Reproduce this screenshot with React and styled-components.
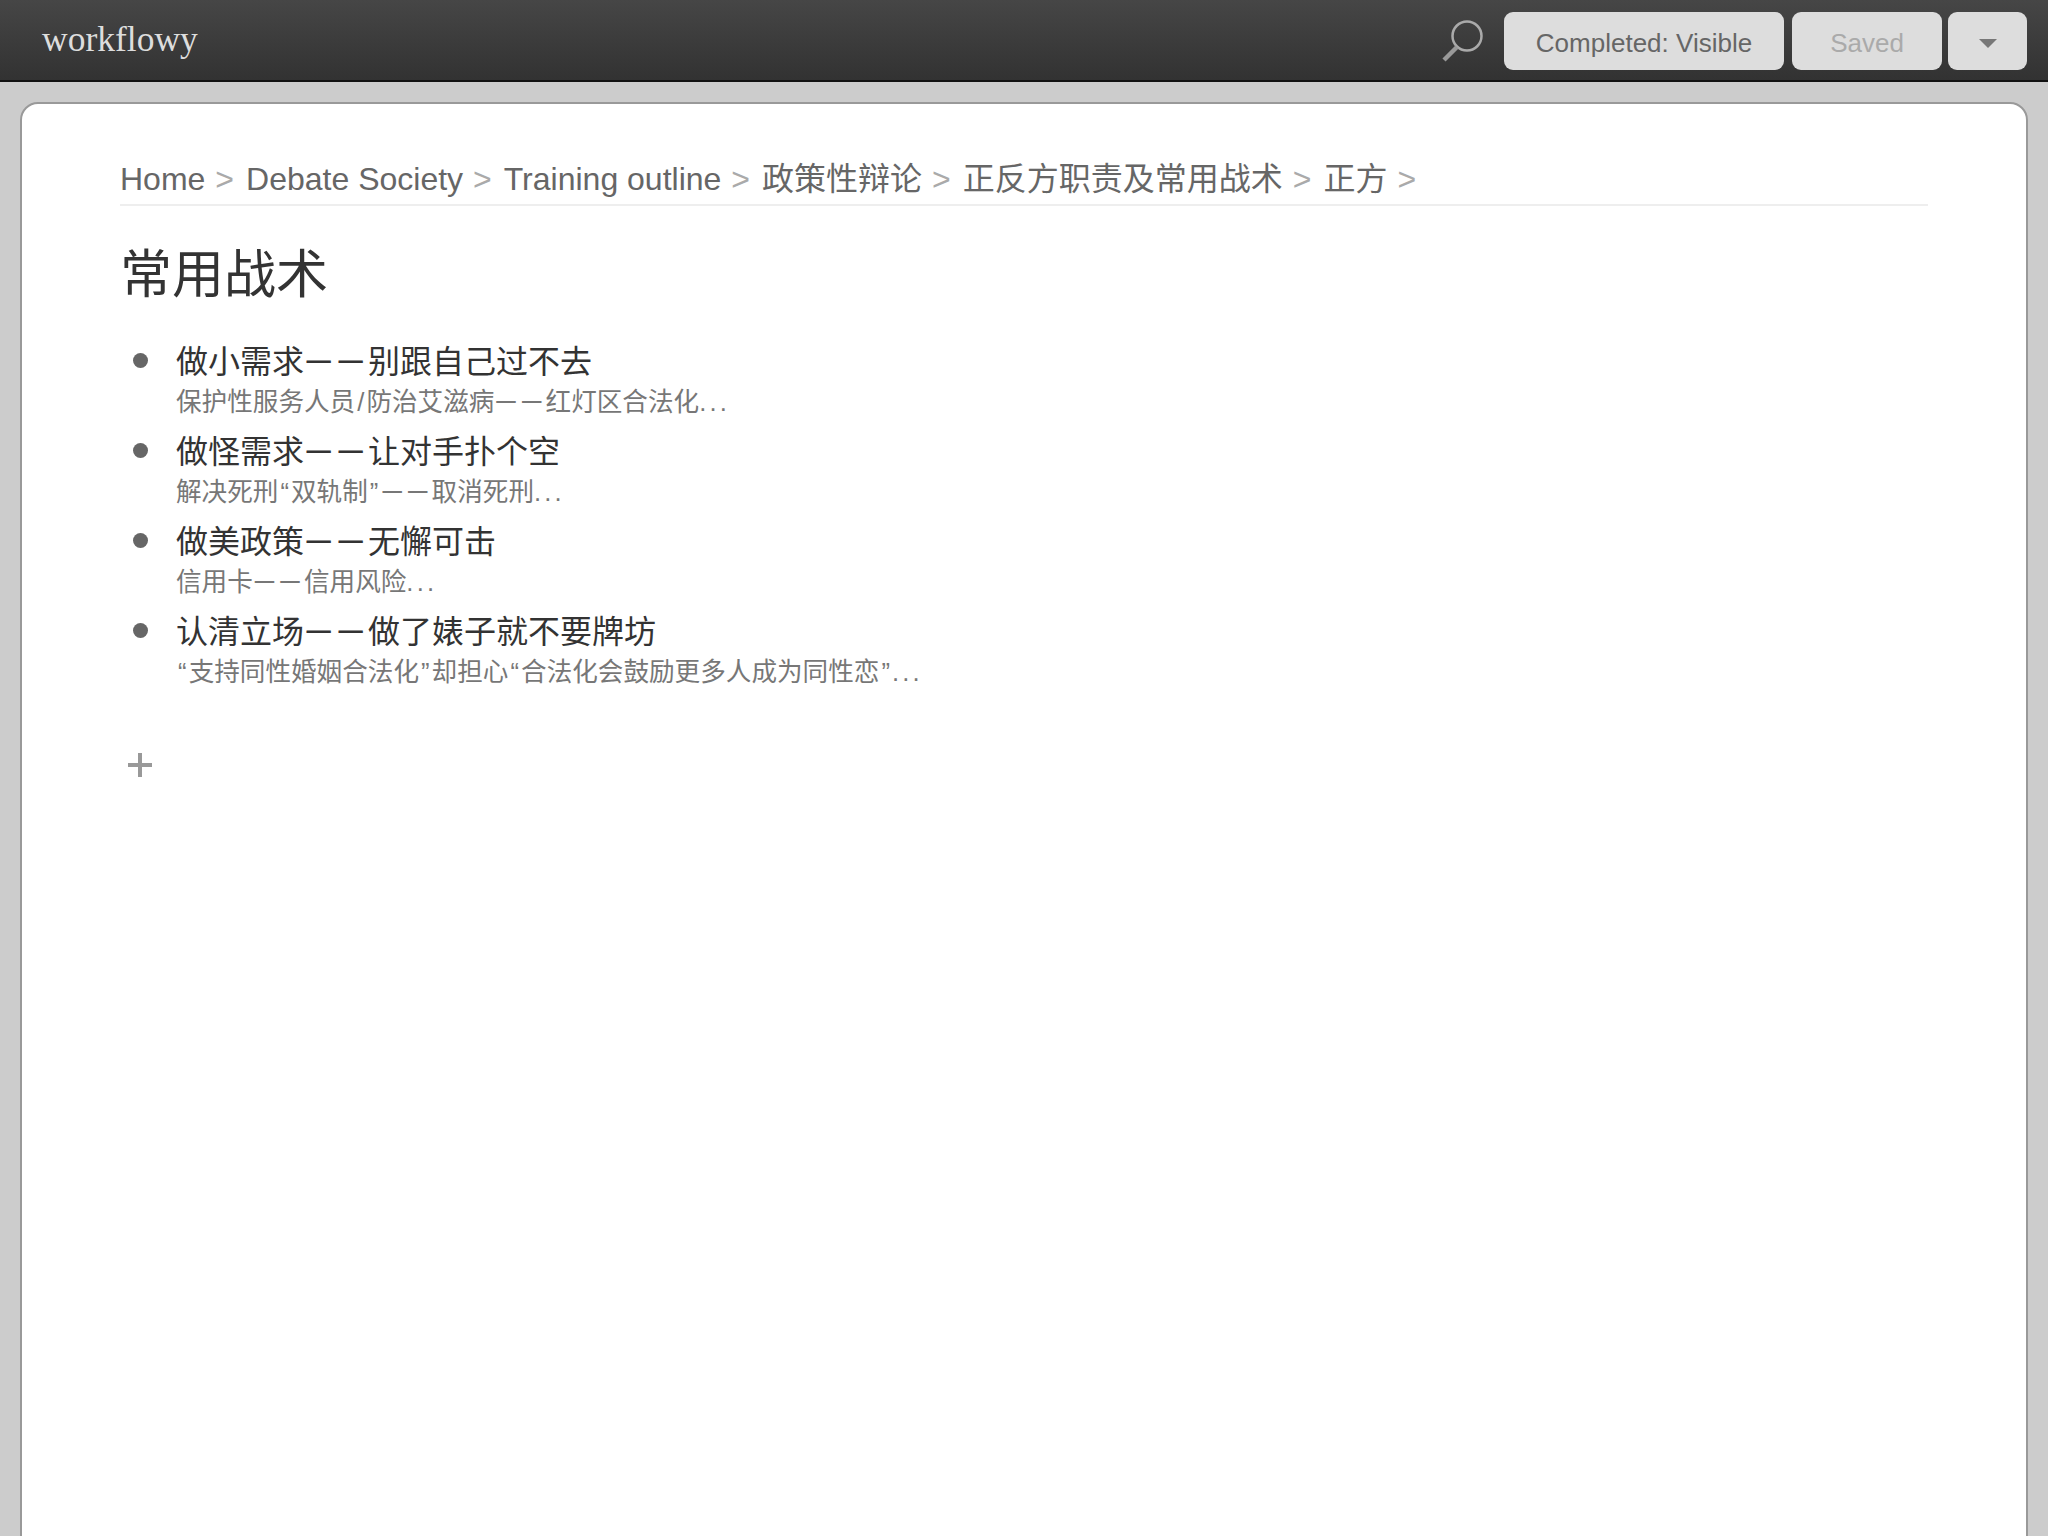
import React from 'react';
import styled, { createGlobalStyle } from 'styled-components';

const sans = '"Liberation Sans", "Noto Sans CJK SC", sans-serif';

const GlobalStyle = createGlobalStyle`
  html, body {
    margin: 0;
    background: #ccc;
  }
  body {
    font-family: ${sans};
    height: 1536px;
    overflow: hidden;
  }
`;

const Header = styled.header`
  display: flex;
  align-items: center;
  padding: 2px 21px 0 42px;
  height: 78px;
  background: linear-gradient(#464646, #323232);
  border-bottom: 2px solid #111;
`;
const Logo = styled.div`
  font-family: "Liberation Serif", serif;
  font-size: 35.5px;
  color: #ddd;
  margin-right: auto;
  margin-top: -4px;
`;
const SearchIcon = styled.svg`
  width: 44px;
  height: 44px;
  margin: -2px 19px 0 0;
`;
const Button = styled.div`
  height: 58px;
  width: ${props => props.$width}px;
  margin-left: ${props => props.$gap || 0}px;
  display: flex;
  align-items: center;
  justify-content: center;
  background: #ddd;
  border-radius: 9px;
  font-size: 26px;
  padding-top: 4px;
  box-sizing: border-box;
  color: ${props => props.$muted ? '#aaa' : '#666'};
`;
const Caret = styled.div`
  width: 0;
  height: 0;
  border-left: 9px solid transparent;
  border-right: 9px solid transparent;
  border-top: 9px solid #777;
`;
const Card = styled.main`
  margin: 20px 20px 0;
  padding: 49px 98px 0;
  min-height: 1450px;
  background: #fff;
  border: 2px solid #999;
  border-radius: 18px;
`;
const Breadcrumb = styled.nav`
  display: flex;
  height: 51px;
  align-items: center;
  border-bottom: 2px solid #eee;
  font-size: 32px;
  line-height: 32px;
  color: #666;
`;
const Sep = styled.span`
  color: #aaa;
  margin: 0 12px 0 10px;
`;
const Title = styled.h1`
  margin: 38px 0 0;
  font-size: 52px;
  line-height: 62px;
  font-weight: 400;
  color: #333;
`;
const List = styled.div`
  margin-top: 28px;
`;
const Item = styled.div`
  display: flex;
  height: 90px;
`;
const BulletCell = styled.div`
  width: 56px;
  height: 53px;
  display: flex;
  align-items: center;
  padding-left: 13px;
  box-sizing: border-box;
`;
const Bullet = styled.div`
  width: 15px;
  height: 15px;
  border-radius: 50%;
  background: #666;
`;
const Name = styled.div`
  font-size: 32px;
  line-height: 48px;
  padding: 4px 0 3px;
  color: #333;
`;
const Note = styled.div`
  font-size: 25.6px;
  line-height: 26px;
  color: #777;
`;
const Dash = styled.span`
  font-size: 0.76em;
  font-weight: 700;
  line-height: 0;
  letter-spacing: 0.316em;
  vertical-align: 0.2em;
  padding-left: 0.1em;
  margin-right: -0.1em;
`;
const Dots = styled.span`
  letter-spacing: 0.125em;
`;
const Mark = styled.span`
  letter-spacing: 0.08em;
  margin-left: 0.08em;
`;
const AddButton = styled.svg`
  display: block;
  width: 24px;
  height: 24px;
  margin: 59px 0 0 8px;
`;

const crumbs = ['Home', 'Debate Society', 'Training outline', '政策性辩论', '正反方职责及常用战术', '正方'];

const items = [
  {
    name: '做小需求——别跟自己过不去',
    note: '保护性服务人员/防治艾滋病——红灯区合法化...',
  },
  {
    name: '做怪需求——让对手扑个空',
    note: '解决死刑“双轨制”——取消死刑...',
  },
  {
    name: '做美政策——无懈可击',
    note: '信用卡——信用风险...',
  },
  {
    name: '认清立场——做了婊子就不要牌坊',
    note: '“支持同性婚姻合法化”却担心“合法化会鼓励更多人成为同性恋”...',
  },
];

// the latin glyphs sit wider in the original's CJK font
const format = text => text.split(/(——|[“”/]|\.\.\.)/).map((part, i) => {
  if (part === '——') return <Dash key={i}>{part}</Dash>;
  if (part === '...') return <Dots key={i}>{part}</Dots>;
  if (part === '“' || part === '”' || part === '/') return <Mark key={i}>{part}</Mark>;
  return part;
});

const App = () => (
  <>
    <GlobalStyle />
    <Header>
      <Logo>workflowy</Logo>
      <SearchIcon viewBox="0 0 44 44">
        <circle cx="26" cy="18" r="14.5" fill="none" stroke="#aaa" strokeWidth="2.5" />
        <line x1="16" y1="29" x2="3" y2="42" stroke="#999" strokeWidth="4.5" />
      </SearchIcon>
      <Button $width={280}>Completed: Visible</Button>
      <Button $width={150} $gap={8} $muted>Saved</Button>
      <Button $width={79} $gap={6}><Caret /></Button>
    </Header>
    <Card>
      <Breadcrumb>
        {crumbs.map(c => (
          <React.Fragment key={c}>
            <span>{c}</span>
            <Sep>&gt;</Sep>
          </React.Fragment>
        ))}
      </Breadcrumb>
      <Title>常用战术</Title>
      <List>
        {items.map(item => (
          <Item key={item.name}>
            <BulletCell><Bullet /></BulletCell>
            <div>
              <Name>{format(item.name)}</Name>
              <Note>{format(item.note)}</Note>
            </div>
          </Item>
        ))}
      </List>
      <AddButton viewBox="0 0 24 24">
        <rect x="10" y="0" width="4" height="24" fill="#999" />
        <rect x="0" y="10" width="24" height="4" fill="#999" />
      </AddButton>
    </Card>
  </>
);

export default App;
